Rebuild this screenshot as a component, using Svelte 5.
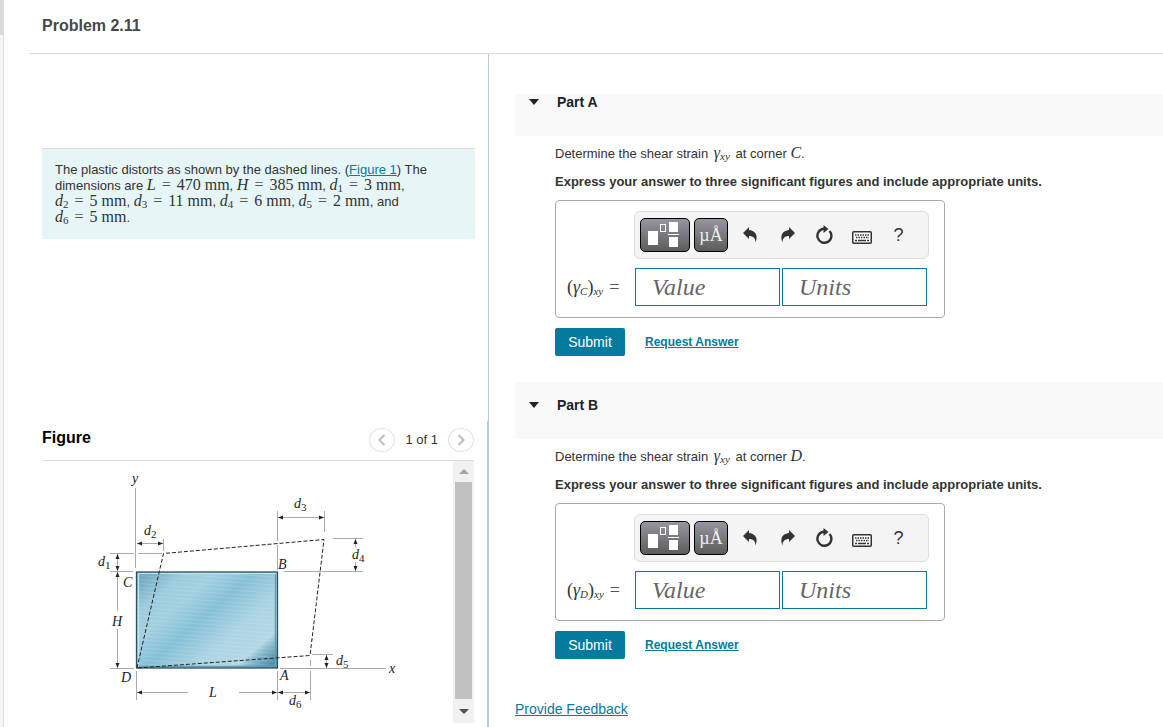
<script>
    const dims = [
        { name: 'L', value: '470' },
        { name: 'H', value: '385' },
        { name: 'd', sub: '1', value: '3' },
        { name: 'd', sub: '2', value: '5' },
        { name: 'd', sub: '3', value: '11' },
        { name: 'd', sub: '4', value: '6' },
        { name: 'd', sub: '5', value: '2' },
        { name: 'd', sub: '6', value: '5' }
    ];

    let parts = $state([
        { id: 'A', corner: 'C', open: true, value: '', units: '' },
        { id: 'B', corner: 'D', open: true, value: '', units: '' }
    ]);

    // thin extension and dimension lines: x1, y1, x2, y2
    const thinLines = [
        [135.5, 488, 135.5, 568],
        [110, 553.5, 134, 553.5],
        [138, 553.5, 162, 553.5],
        [110, 571.5, 133, 571.5],
        [110, 668.5, 134, 668.5],
        [163.5, 539, 163.5, 551],
        [277.5, 511, 277.5, 541],
        [277.5, 545, 277.5, 570],
        [324.5, 511, 324.5, 532],
        [333, 538.5, 363, 538.5],
        [284, 571.5, 363, 571.5],
        [312, 654.5, 333, 654.5],
        [280, 668.5, 386, 668.5],
        [136.5, 671, 136.5, 700],
        [277.5, 671, 277.5, 700],
        [310.5, 660, 310.5, 666],
        [310.5, 671, 310.5, 700],
        [117.5, 554, 117.5, 571],
        [117.5, 572, 117.5, 611],
        [117.5, 629, 117.5, 668],
        [137, 543.5, 163, 543.5],
        [278, 517.5, 324, 517.5],
        [355.5, 539, 355.5, 547],
        [355.5, 562, 355.5, 571],
        [326.5, 655, 326.5, 668],
        [137, 692.5, 188, 692.5],
        [239, 692.5, 277, 692.5],
        [278, 692.5, 310, 692.5]
    ];

    // arrow tips: x, y, rotation (0 points right)
    const arrows = [
        [117.5, 554, -90], [117.5, 571, 90],
        [117.5, 572, -90], [117.5, 668, 90],
        [137, 543.5, 180], [163, 543.5, 0],
        [278, 517.5, 180], [324, 517.5, 0],
        [355.5, 539, -90], [355.5, 571, 90],
        [326.5, 655, -90], [326.5, 668, 90],
        [137, 692.5, 180], [277, 692.5, 0],
        [278, 692.5, 180], [310, 692.5, 0]
    ];

    const labels = [
        { x: 132, y: 483, t: 'y' },
        { x: 389, y: 673, t: 'x' },
        { x: 123, y: 587, t: 'C' },
        { x: 278, y: 569, t: 'B' },
        { x: 121, y: 682, t: 'D' },
        { x: 280, y: 680, t: 'A' },
        { x: 112, y: 626, t: 'H' },
        { x: 209, y: 697, t: 'L' },
        { x: 98, y: 566, t: 'd', s: '1' },
        { x: 144, y: 535, t: 'd', s: '2' },
        { x: 294, y: 508, t: 'd', s: '3' },
        { x: 352, y: 559, t: 'd', s: '4' },
        { x: 336, y: 665, t: 'd', s: '5' },
        { x: 289, y: 705, t: 'd', s: '6' }
    ];
</script>

<div class="page">
    <div class="rail"><div class="rail-thumb"></div></div>
    <div class="main">
        <header class="page-head">
            <h1>Problem 2.11</h1>
        </header>

        <div class="columns">
            <div class="left">
                <section class="problem">
                    <div class="statement">
                        The plastic distorts as shown by the dashed lines. (<a href="#figure">Figure 1</a>) The dimensions are
                        {#each dims as d, i}
                            {i === dims.length - 1 ? ' and ' : ' '}<span class="math"><i>{d.name}</i>{#if d.sub}<sub>{d.sub}</sub>{/if}<span class="eq">=</span>{d.value}<span class="unit">mm</span></span>{i === dims.length - 1 ? '.' : ', '}
                        {/each}
                    </div>
                </section>

                <section class="figure" id="figure">
                    <div class="figure-head">
                        <h2>Figure</h2>
                        <div class="pager">
                            <button class="round" aria-label="Previous figure">
                                <svg width="8" height="12" viewBox="0 0 8 12"><path d="M6.5 1 L1.5 6 L6.5 11" /></svg>
                            </button>
                            <span>1 of 1</span>
                            <button class="round" aria-label="Next figure">
                                <svg width="8" height="12" viewBox="0 0 8 12"><path d="M1.5 1 L6.5 6 L1.5 11" /></svg>
                            </button>
                        </div>
                    </div>
                    <div class="figure-body">
                        <svg class="drawing" viewBox="42 461 411 262" role="img" aria-label="Plate ABCD with distorted outline">
                            <defs>
                                <linearGradient id="plate" x1="0" y1="0.1" x2="1" y2="0.9">
                                    <stop offset="0" stop-color="#6fa9c2" />
                                    <stop offset="0.16" stop-color="#9bcbdd" />
                                    <stop offset="0.3" stop-color="#a3d0e0" />
                                    <stop offset="0.47" stop-color="#85c0d7" />
                                    <stop offset="0.68" stop-color="#abd4e2" />
                                    <stop offset="0.86" stop-color="#b3d8e5" />
                                    <stop offset="0.9" stop-color="#8dbdd0" />
                                    <stop offset="1" stop-color="#4f8fac" />
                                </linearGradient>
                                <pattern id="grain" width="8" height="4" patternUnits="userSpaceOnUse" patternTransform="rotate(4)">
                                    <rect width="8" height="1" fill="#fff" opacity="0.12" />
                                </pattern>
                            </defs>

                            <rect x="137" y="572" width="140" height="96" fill="url(#plate)" />
                            <rect x="137" y="572" width="140" height="96" fill="url(#grain)" />
                            <path d="M138.5 667 V573.5 H276" class="bevel-light" />
                            <path d="M275.5 574 V666.5 H139" class="bevel-dark" />
                            <rect x="136.5" y="572" width="141" height="96" class="edge" />

                            {#each thinLines as [x1, y1, x2, y2]}
                                <line {x1} {y1} {x2} {y2} class="thin" />
                            {/each}
                            {#each arrows as [x, y, r]}
                                <path d="M0 0 L-5 -2 V2 Z" class="tip" transform="translate({x} {y}) rotate({r})" />
                            {/each}

                            <path d="M137 668 L163.5 553.5 L324 539.5 L310 655.5 Z" class="dashed" />

                            {#each labels as l}
                                <text x={l.x} y={l.y}>{l.t}{#if l.s}<tspan class="index" dy="3">{l.s}</tspan>{/if}</text>
                            {/each}
                        </svg>

                        <div class="scrollbar">
                            <button aria-label="Scroll up"><span class="tri up"></span></button>
                            <div class="thumb"></div>
                            <button aria-label="Scroll down"><span class="tri down"></span></button>
                        </div>
                    </div>
                </section>
            </div>

            <main class="right">
                {#each parts as part (part.id)}
                    <section class="part">
                        <h2 class="part-head">
                            <button class="toggle" aria-expanded={part.open} onclick={() => (part.open = !part.open)}>
                                <span class="caret" class:closed={!part.open}></span>
                                Part {part.id}
                            </button>
                        </h2>
                        {#if part.open}
                            <div class="part-body">
                                <p>Determine the shear strain <span class="math gamma"><i>γ</i><sub class="it">xy</sub></span> at corner <span class="math"><i>{part.corner}</i></span>.</p>
                                <p class="strong">Express your answer to three significant figures and include appropriate units.</p>

                                <div class="answer">
                                    <div class="toolbar">
                                        <button class="dark wide" aria-label="Templates">
                                            <svg width="34" height="26" viewBox="0 0 34 26">
                                                <rect x="0" y="9" width="10" height="14" fill="#fff" />
                                                <rect x="12.5" y="2.5" width="5" height="7" fill="none" stroke="#fff" />
                                                <rect x="21" y="0" width="9" height="10" fill="#fff" />
                                                <rect x="20" y="12" width="11" height="1" fill="#fff" />
                                                <rect x="21" y="15" width="9" height="10" fill="#fff" />
                                            </svg>
                                        </button>
                                        <button class="dark" aria-label="Symbols">µÅ</button>
                                        <div class="tools">
                                            <button aria-label="Undo">
                                                <svg width="16" height="16" viewBox="0 0 16 16"><path d="M0 6 L6 0 V3 C11 3.5 16 7 12.5 15.5 C12.5 11 10 9 6 9 V12 Z" fill="#333" /></svg>
                                            </button>
                                            <button aria-label="Redo">
                                                <svg width="16" height="16" viewBox="0 0 16 16"><path d="M15 6 L9 0 V3 C4 3.5 -1 7 2.5 15.5 C2.5 11 5 9 9 9 V12 Z" fill="#333" /></svg>
                                            </button>
                                            <button aria-label="Reset">
                                                <svg width="18" height="20" viewBox="0 0 18 20">
                                                    <path d="M13.5 6 A7 7 0 1 1 8 3.8" fill="none" stroke="#333" stroke-width="2.4" />
                                                    <path d="M7.5 0 L12.5 4 L7.5 8 Z" fill="#333" />
                                                </svg>
                                            </button>
                                            <button aria-label="Keyboard">
                                                <svg width="20" height="17" viewBox="0 -4 20 17">
                                                    <rect x="0.75" y="0.75" width="18.5" height="11.5" rx="1" fill="#fff" stroke="#333" stroke-width="1.5" />
                                                    <path d="M3 4 H17" stroke="#333" stroke-width="1.5" stroke-dasharray="1.5 1" />
                                                    <path d="M4 6.5 H17" stroke="#333" stroke-width="1.5" stroke-dasharray="1.5 1" />
                                                    <path d="M3 9.5 H5 M6 9.5 H14 M15 9.5 H17" stroke="#333" stroke-width="1.5" />
                                                </svg>
                                            </button>
                                            <button class="help" aria-label="Help">?</button>
                                        </div>
                                    </div>
                                    <label class="math lhs" for="value-{part.id}">(<i>γ</i><sub class="it">{part.corner}</sub>)<sub class="it">xy</sub><span class="eq">=</span></label>
                                    <div class="fields">
                                        <input id="value-{part.id}" type="text" placeholder="Value" bind:value={part.value} />
                                        <input type="text" placeholder="Units" aria-label="Units" bind:value={part.units} />
                                    </div>
                                </div>

                                <div class="actions">
                                    <button class="submit">Submit</button>
                                    <a href="#answer-{part.id}">Request Answer</a>
                                </div>
                            </div>
                        {/if}
                    </section>
                {/each}
                <a class="feedback" href="#feedback">Provide Feedback</a>
            </main>
        </div>
    </div>
</div>

<style>
    :global(body) {
        background: #fff;
    }

    .page {
        display: flex;
        min-height: 100vh;
        font-family: "Liberation Sans", Arial, sans-serif;
        font-size: 13px;
        line-height: 16px;
        color: #333;
    }

    button {
        font: inherit;
        color: inherit;
        padding: 0;
        border: 0;
        background: none;
        cursor: pointer;
    }

    h1, h2, p {
        margin: 0;
    }

    a {
        color: #047a9c;
    }

    .rail {
        flex: none;
        width: 3px;
        background: #f5f5f5;
        border-right: 1px solid #dedede;
    }

    .rail-thumb {
        height: 35px;
        background: #d9d9d9;
    }

    .main {
        flex: 1;
        min-width: 0;
        display: flex;
        flex-direction: column;
        padding-left: 25px;
    }

    .page-head {
        padding: 16px 13px 17px;
        border-bottom: 1px solid #ddd;
    }

    h1 {
        font-size: 16px;
        line-height: 20px;
        color: #484848;
    }

    .columns {
        flex: 1;
        display: flex;
    }

    .left {
        flex: none;
        box-sizing: border-box;
        width: 460px;
        border-right: 1px solid #b6cbdc;
    }

    .problem {
        padding: 94px 13px 182px;
    }

    .statement {
        padding: 13px;
        background: #e6f6f7;
        border-top: 1px solid #ddd;
    }

    .math {
        font-family: "Liberation Serif", "Times New Roman", serif;
        font-size: 16px;
        line-height: 1px;
        white-space: nowrap;
    }

    .math sub {
        font-size: 11px;
        line-height: 1px;
        vertical-align: -2px;
    }

    .math sub.it {
        font-style: italic;
    }

    .math.gamma {
        margin: 0 2px;
    }

    .eq {
        margin: 0 6px;
        color: #555;
    }

    .unit {
        margin-left: 4px;
    }

    .lhs {
        font-size: 18px;
        line-height: 20px;
    }

    .figure {
        padding: 0 13px 4px;
        border-right: 1px solid #b6cbdc;
    }

    .figure-head {
        display: flex;
        justify-content: space-between;
        padding: 7px 0 8px;
        border-bottom: 1px solid #ddd;
    }

    .figure-head h2 {
        font-size: 16px;
        line-height: 20px;
        color: #000;
    }

    .pager {
        display: flex;
        align-items: center;
        gap: 10px;
    }

    .round {
        display: flex;
        align-items: center;
        justify-content: center;
        box-sizing: border-box;
        width: 26px;
        height: 24px;
        border: 1px solid #e2e2e2;
        border-radius: 50%;
    }

    .round path {
        fill: none;
        stroke: #bbb;
        stroke-width: 2;
    }

    .figure-body {
        display: flex;
    }

    .drawing {
        flex: 1;
        min-width: 0;
        height: 262px;
    }

    .drawing text {
        font-family: "Liberation Serif", "Times New Roman", serif;
        font-size: 14px;
        font-style: italic;
        fill: #222;
    }

    .drawing .index {
        font-size: 11px;
        font-style: normal;
    }

    .thin {
        stroke: #aaa;
        stroke-width: 1;
    }

    .tip {
        fill: #222;
    }

    .dashed {
        fill: none;
        stroke: #222;
        stroke-width: 1;
        stroke-dasharray: 4 2;
    }

    .edge {
        fill: none;
        stroke: #2f505e;
        stroke-width: 1.3;
    }

    .bevel-light {
        fill: none;
        stroke: #c5e4ee;
        stroke-width: 1.2;
    }

    .bevel-dark {
        fill: none;
        stroke: #5f9fb8;
        stroke-width: 1.5;
    }

    .scrollbar {
        display: flex;
        flex-direction: column;
        width: 21px;
        background: #f1f1f1;
    }

    .scrollbar button {
        display: flex;
        align-items: center;
        justify-content: center;
        height: 21px;
    }

    .scrollbar button:last-child {
        height: 24px;
    }

    .thumb {
        flex: 1;
        margin: 0 2px;
        background: #c1c1c1;
    }

    .tri {
        border: 5px solid transparent;
    }

    .tri.up {
        border-top: 0;
        border-bottom-color: #a3a3a3;
    }

    .tri.down {
        border-bottom: 0;
        border-top-color: #505050;
    }

    .right {
        flex: 1;
        min-width: 0;
        padding: 40px 0 0 26px;
    }

    .part {
        margin-bottom: 26px;
    }

    .part-head {
        padding: 15px 14px 26px;
        background: #f9f9f9;
        line-height: 16px;
        color: #222;
    }

    .part:first-child .part-head {
        padding-top: 0;
    }

    .toggle {
        display: flex;
        align-items: center;
        gap: 18px;
        font-size: 14px;
    }

    .caret {
        border: 5px solid transparent;
        border-top: 6px solid #222;
        border-bottom: 0;
    }

    .caret.closed {
        transform: rotate(-90deg);
    }

    .part-body {
        padding: 10px 0 0 40px;
    }

    .part-body p {
        margin-bottom: 12px;
    }

    .part-body .strong {
        margin-bottom: 10px;
        font-weight: bold;
    }

    .answer {
        display: grid;
        grid-template-columns: 1fr auto;
        row-gap: 9px;
        align-items: center;
        box-sizing: border-box;
        max-width: 390px;
        padding: 10px 15px 11px 11px;
        border: 1px solid #aaa;
        border-radius: 4px;
    }

    .toolbar {
        grid-column: 2;
        display: flex;
        align-items: center;
        gap: 4px;
        box-sizing: border-box;
        height: 48px;
        padding: 0 5px;
        background: #f4f4f4;
        border: 1px solid #ddd;
        border-radius: 6px;
    }

    .dark {
        display: flex;
        align-items: center;
        justify-content: center;
        box-sizing: border-box;
        width: 34px;
        height: 34px;
        border: 1px solid #000;
        border-radius: 5px;
        background: linear-gradient(#97959f, #5c5c5e);
        font-family: "Liberation Serif", "Times New Roman", serif;
        font-size: 18px;
        line-height: 20px;
        color: #eee;
    }

    .dark.wide {
        width: 50px;
    }

    .tools {
        display: flex;
    }

    .tools button {
        display: flex;
        align-items: center;
        justify-content: center;
        width: 37px;
        height: 34px;
    }

    .tools .help {
        font-size: 18px;
    }

    .fields {
        display: flex;
        gap: 2px;
        padding: 0 2px 0 1px;
    }

    .fields input {
        box-sizing: border-box;
        flex: 1;
        min-width: 0;
        width: 145px;
        height: 38px;
        padding: 0 16px;
        border: 1px solid #047a9c;
        border-radius: 0;
        background: #fff;
        font-family: "Liberation Serif", "Times New Roman", serif;
        font-size: 24px;
        color: #333;
    }

    .fields input::placeholder {
        font-style: italic;
        color: #666;
        opacity: 1;
    }

    .actions {
        display: flex;
        align-items: center;
        gap: 20px;
        margin-top: 10px;
    }

    .submit {
        width: 70px;
        height: 28px;
        border-radius: 2px;
        background: #047a9c;
        color: #fff;
        font-size: 14px;
    }

    .actions a {
        font-size: 12px;
        font-weight: bold;
    }

    .feedback {
        display: inline-block;
        margin: 16px 0;
        font-size: 14px;
    }
</style>
